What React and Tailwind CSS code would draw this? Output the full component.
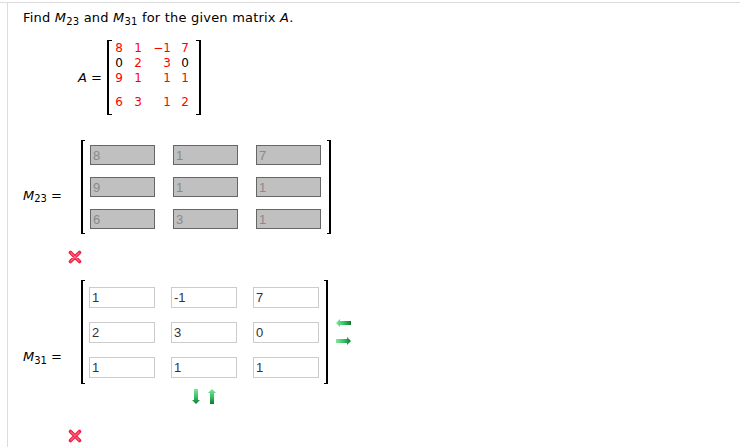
import React from 'react';

const grayRows = [
    ['8', '1', '7'],
    ['9', '1', '1'],
    ['6', '3', '1'],
];

const answerRows = [
    ['1', '-1', '7'],
    ['2', '3', '0'],
    ['1', '1', '1'],
];

// square bracket pair drawn with borders around the content
const Bracket = ({ tick = 'w-[4px]', className, children }) => (
    <div className="flex items-stretch">
        <div className={`${tick} border-l-2 border-y border-black`} />
        <div className={className}>{children}</div>
        <div className={`${tick} border-r-2 border-y border-black`} />
    </div>
);

const Sym = ({ sub }) => (
    <>
        <i>M</i>
        <sub className="text-[10px]">{sub}</sub>
    </>
);

const RedX = () => (
    <svg width="14" height="14" viewBox="0 0 14 14">
        <path d="M2.5 2.5 L11.5 11.5 M11.5 2.5 L2.5 11.5" stroke="#ee2244" strokeWidth="3.6" strokeLinecap="round" />
        <path d="M3 3 L11 11 M11 3 L3 11" stroke="#ff6680" strokeWidth="1.2" strokeLinecap="round" />
    </svg>
);

const ArrowH = ({ dir }) => (
    <svg width="15" height="8" viewBox="0 0 15 8">
        <defs>
            <linearGradient id={`gh-${dir}`} x1="0" y1="0" x2="1" y2="0">
                <stop offset="0" stopColor="#7ee89c" />
                <stop offset="0.5" stopColor="#3cc268" />
                <stop offset="1" stopColor="#0b7a2c" />
            </linearGradient>
        </defs>
        {dir === 'left' ? (
            <polygon points="0,4 4,0 4,2 15,2 15,6 4,6 4,8" fill={`url(#gh-${dir})`} />
        ) : (
            <polygon points="15,4 11,0 11,2 0,2 0,6 11,6 11,8" fill={`url(#gh-${dir})`} />
        )}
    </svg>
);

const ArrowV = ({ dir }) => (
    <svg width="8" height="15" viewBox="0 0 8 15">
        <defs>
            <linearGradient id={`gv-${dir}`} x1="0" y1="0" x2="0" y2="1">
                <stop offset="0" stopColor="#7ee89c" />
                <stop offset="0.5" stopColor="#3cc268" />
                <stop offset="1" stopColor="#0b7a2c" />
            </linearGradient>
        </defs>
        {dir === 'down' ? (
            <polygon points="4,15 0,11 2,11 2,0 6,0 6,11 8,11" fill={`url(#gv-${dir})`} />
        ) : (
            <polygon points="4,0 0,4 2,4 2,15 6,15 6,4 8,4" fill={`url(#gv-${dir})`} />
        )}
    </svg>
);

const red = 'text-[#ff0000]';

const matrixA = [
    [['8', red], ['1', red], ['−1', red], ['7', red]],
    [['0', ''], ['2', red], ['3', red], ['0', '']],
    [['9', red], ['1', red], ['1', red], ['1', red]],
];
const lastRowA = [['6', red], ['3', red], ['1', red], ['2', red]];

const RowA = ({ cells, extra = '' }) => (
    <div className={`grid grid-cols-[11px_19px_29px_18px] justify-items-end leading-[15px] ${extra}`}>
        {cells.map(([v, c], i) => (
            <span key={i} className={c}>{v}</span>
        ))}
    </div>
);

export default function App() {
    return (
        <div className="w-[740px] h-[447px] bg-white overflow-hidden font-['DejaVu_Sans',sans-serif] text-[13px] text-black">
            <div className="mt-[2px] border-t border-[#dcdcdc]" />
            <div className="ml-[7px] h-[444px] border-l border-[#dcdcdc] pl-[15px]">

                {/* question */}
                <div className="pt-[7px] leading-[16px] tracking-[0.2px]">
                    Find <Sym sub="23" /> and <Sym sub="31" /> for the given matrix <i>A</i>.
                </div>

                {/* matrix A */}
                <div className="mt-[14px] ml-[55px] flex items-center">
                    <div className="w-[29px]"><i>A</i> =</div>
                    <Bracket tick="w-[5px]" className="pt-[1px] pb-[5px] pr-[7px] text-[12px]">
                        {matrixA.map((r, i) => <RowA key={i} cells={r} />)}
                        <RowA cells={lastRowA} extra="mt-[9px]" />
                    </Bracket>
                </div>

                {/* M23 (given, greyed out) */}
                <div className="mt-[25px] flex items-center">
                    <div className="w-[58px] pt-[17px] leading-[16px]"><Sym sub="23" /> =</div>
                    <Bracket className="pl-[5px] pr-[6px] pt-[5px] pb-[5px] grid grid-cols-[65px_65px_65px] gap-x-[18px] gap-y-[12px]">
                        {grayRows.flat().map((v, i) => (
                            <div key={i} className="h-[20px] border border-[#666] bg-[#c0c0c0] pl-[2px] font-['Liberation_Sans',sans-serif] text-[13px] leading-[19px] text-[#8a8a8a]">
                                {v}
                            </div>
                        ))}
                    </Bracket>
                </div>

                <div className="mt-[16px] ml-[45px] h-[14px]"><RedX /></div>

                {/* M31 answer */}
                <div className="mt-[16px] flex items-center">
                    <div className="w-[58px] pt-[50px] leading-[16px]"><Sym sub="31" /> =</div>
                    <Bracket className="pl-[4px] pr-[5px] pt-[7px] pb-[6px] grid grid-cols-[66px_66px_66px] auto-rows-[21px] gap-x-[16px] gap-y-[14px]">
                        {answerRows.flat().map((v, i) => (
                            <div key={i} className="h-[21px] border border-[#cccccc] bg-white pl-[2px] font-['Liberation_Sans',sans-serif] text-[13px] leading-[19px] text-[#333]">
                                {v}
                            </div>
                        ))}
                    </Bracket>
                    <div className="ml-[8px] flex flex-col gap-[10px]">
                        <ArrowH dir="left" />
                        <ArrowH dir="right" />
                    </div>
                </div>

                <div className="mt-[5px] ml-[169px] flex gap-[8px]">
                    <ArrowV dir="down" />
                    <ArrowV dir="up" />
                </div>

                <div className="mt-[25px] ml-[45px] h-[14px]"><RedX /></div>
            </div>
        </div>
    );
}
